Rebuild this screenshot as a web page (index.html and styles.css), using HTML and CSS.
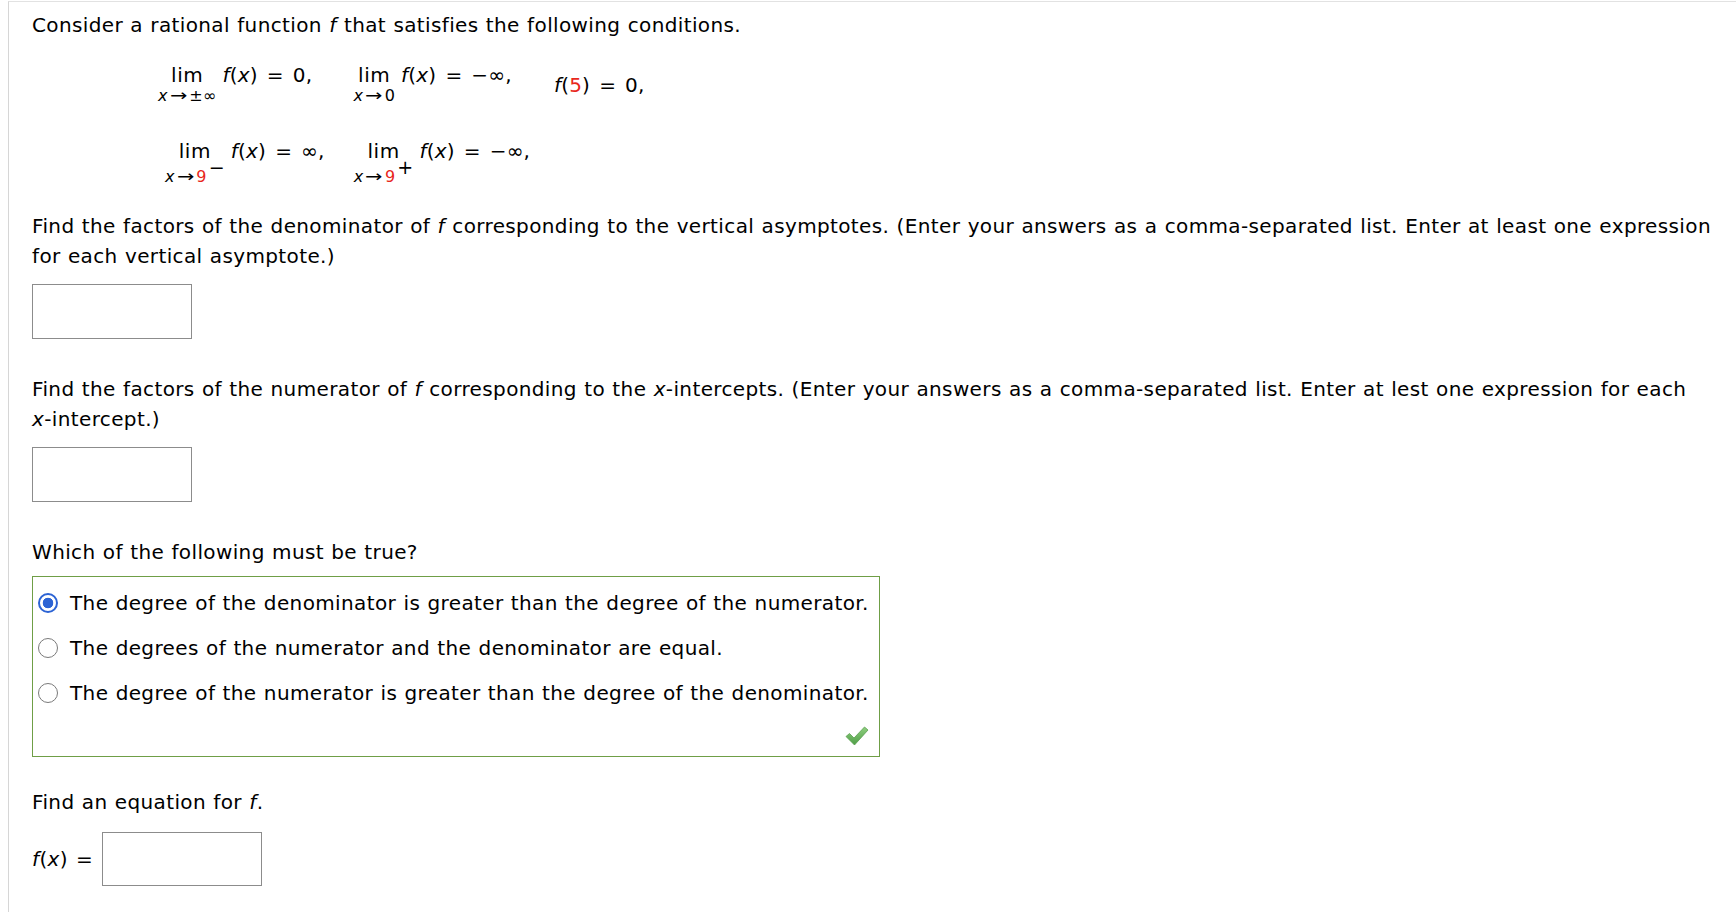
FILE: index.html
```html
<!DOCTYPE html>
<html lang="en">
<head>
<meta charset="utf-8">
<title>Rational function</title>
<link rel="stylesheet" href="styles.css">
</head>
<body>
<div class="frame">
  <p class="title">Consider a rational function <i>f</i> that satisfies the following conditions.</p>

  <div class="math row1">
    <span class="lim lim-a"><span class="lim-w">lim</span><span class="lim-s"><i>x</i><span class="arr">→</span>±∞</span></span><span class="expr"><i>f</i>(<i>x</i>)<span class="eq">=</span>0,</span>
    <span class="lim lim-b"><span class="lim-w">lim</span><span class="lim-s"><i>x</i><span class="arr">→</span>0</span></span><span class="expr"><i>f</i>(<i>x</i>)<span class="eq">=</span>−∞,</span>
    <span class="expr low"><i>f</i>(<span class="red">5</span>)<span class="eq">=</span>0,</span>
  </div>

  <div class="math row2">
    <span class="lim lim-c"><span class="lim-w">lim</span><span class="lim-s lim-sup"><span class="sub-main"><i>x</i><span class="arr">→</span><span class="red">9</span></span><span class="sup">−</span></span></span><span class="expr"><i>f</i>(<i>x</i>)<span class="eq">=</span>∞,</span>
    <span class="lim lim-d"><span class="lim-w">lim</span><span class="lim-s lim-sup"><span class="sub-main"><i>x</i><span class="arr">→</span><span class="red">9</span></span><span class="sup">+</span></span></span><span class="expr"><i>f</i>(<i>x</i>)<span class="eq">=</span>−∞,</span>
  </div>

  <p class="para first">Find the factors of the denominator of <i>f</i> corresponding to the vertical asymptotes. (Enter your answers as a comma-separated list. Enter at least one expression for each vertical asymptote.)</p>
  <div class="answer"></div>

  <p class="para">Find the factors of the numerator of <i>f</i> corresponding to the <i>x</i>-intercepts. (Enter your answers as a comma-separated list. Enter at lest one expression for each <span class="nowrap"><i>x</i>-intercept.)</span></p>
  <div class="answer"></div>

  <p class="para">Which of the following must be true?</p>
  <div class="choices">
    <div class="option"><span class="radio checked"></span><span>The degree of the denominator is greater than the degree of the numerator.</span></div>
    <div class="option"><span class="radio"></span><span>The degrees of the numerator and the denominator are equal.</span></div>
    <div class="option"><span class="radio"></span><span>The degree of the numerator is greater than the degree of the denominator.</span></div>
    <div class="check-row">
      <svg class="check" width="24" height="20" viewBox="0 0 24 20">
        <defs>
          <linearGradient id="g" x1="0" y1="0" x2="0" y2="1">
            <stop offset="0" stop-color="#8fcf7f"/>
            <stop offset="1" stop-color="#4f9e47"/>
          </linearGradient>
        </defs>
        <path d="M1 10.5 L4.5 7.5 L9 12 L19.5 1 L23 4 L9.5 19 Z" fill="url(#g)" stroke="#5a9f50" stroke-width="0.8" stroke-linejoin="round"/>
      </svg>
    </div>
  </div>

  <p class="para eqn">Find an equation for <i>f</i>.</p>
  <div class="final">
    <span class="fx"><i>f</i>(<i>x</i>)<span class="eq">=</span></span>
    <div class="answer inline"></div>
  </div>
</div>
</body>
</html>
```

FILE: styles.css
```css
html, body {
  margin: 0;
  padding: 0;
  background: #ffffff;
}

body {
  font-family: "DejaVu Sans", Verdana, sans-serif;
  font-size: 20px;
  line-height: 30px;
  letter-spacing: 0.37px;
  word-spacing: 0.6px;
  color: #000000;
}

i {
  font-style: italic;
}

.nowrap {
  white-space: nowrap;
}

.frame {
  margin-top: 1px;
  margin-left: 8px;
  border-top: 1px solid #e2e2e2;
  border-left: 1px solid #d6d6d6;
  padding: 8px 10px 30px 23px;
  width: 1728px;
  min-height: 910px;
  box-sizing: border-box;
}

p {
  margin: 0;
}

.red {
  color: #e8271c;
}

/* math rows */
.math {
  line-height: 24px;
  white-space: nowrap;
  letter-spacing: 0.2px;
}

.row1 {
  margin-top: 23px;
  padding-left: 126px;
}

.row2 {
  margin-top: 34px;
  padding-left: 133px;
}

.lim {
  display: inline-flex;
  flex-direction: column;
  align-items: center;
  vertical-align: baseline;
}

.lim-w {
  line-height: 24px;
  letter-spacing: 0.6px;
}

.lim-s {
  font-size: 16px;
  line-height: 18px;
}

.lim-sup {
  display: flex;
  align-items: flex-end;
}

.sub-main {
  line-height: 18px;
}

.arr {
  margin: 0 4px;
  display: inline-block;
  transform: scaleX(1.3);
}

.sup {
  font-size: 19px;
  line-height: 8px;
  margin-bottom: 15px;
  margin-left: 2px;
}

.expr {
  margin-left: 6px;
}

.eq {
  margin: 0 0.45em;
}

.lim-b {
  margin-left: 34px;
}

.lim-d {
  margin-left: 22px;
}

.low {
  margin-left: 35px;
  vertical-align: -10px;
  display: inline-block;
}

/* paragraphs */
.para {
  margin-top: 35px;
}

.para.first {
  margin-top: 25px;
}

.answer {
  width: 158px;
  height: 53px;
  border: 1px solid #8c8c8c;
  margin-top: 13px;
  background: #ffffff;
}

/* choices */
.choices {
  display: inline-flex;
  flex-direction: column;
  margin-top: 9px;
  border: 1px solid #6f9e46;
  padding: 11px 10px 10px 5px;
}

.option {
  display: flex;
  align-items: center;
  gap: 12px;
  height: 30px;
}

.option + .option {
  margin-top: 15px;
}

.radio {
  width: 20px;
  height: 20px;
  box-sizing: border-box;
  border-radius: 50%;
  border: 1.6px solid #7a7a7a;
  background: #ffffff;
  flex: none;
}

.radio.checked {
  border: 2px solid #2c63d4;
  background: radial-gradient(circle, #2c63d4 0, #2c63d4 5px, #ffffff 5.6px);
}

.check-row {
  display: flex;
  justify-content: flex-end;
  margin-top: 18px;
  height: 20px;
}

.check {
  display: block;
}

.eqn {
  margin-top: 30px;
}

.final {
  display: flex;
  align-items: center;
  margin-top: 15px;
}

.fx .eq {
  margin: 0 0.45em 0 0.4em;
}

.answer.inline {
  margin-top: 0;
  height: 52px;
}
```
